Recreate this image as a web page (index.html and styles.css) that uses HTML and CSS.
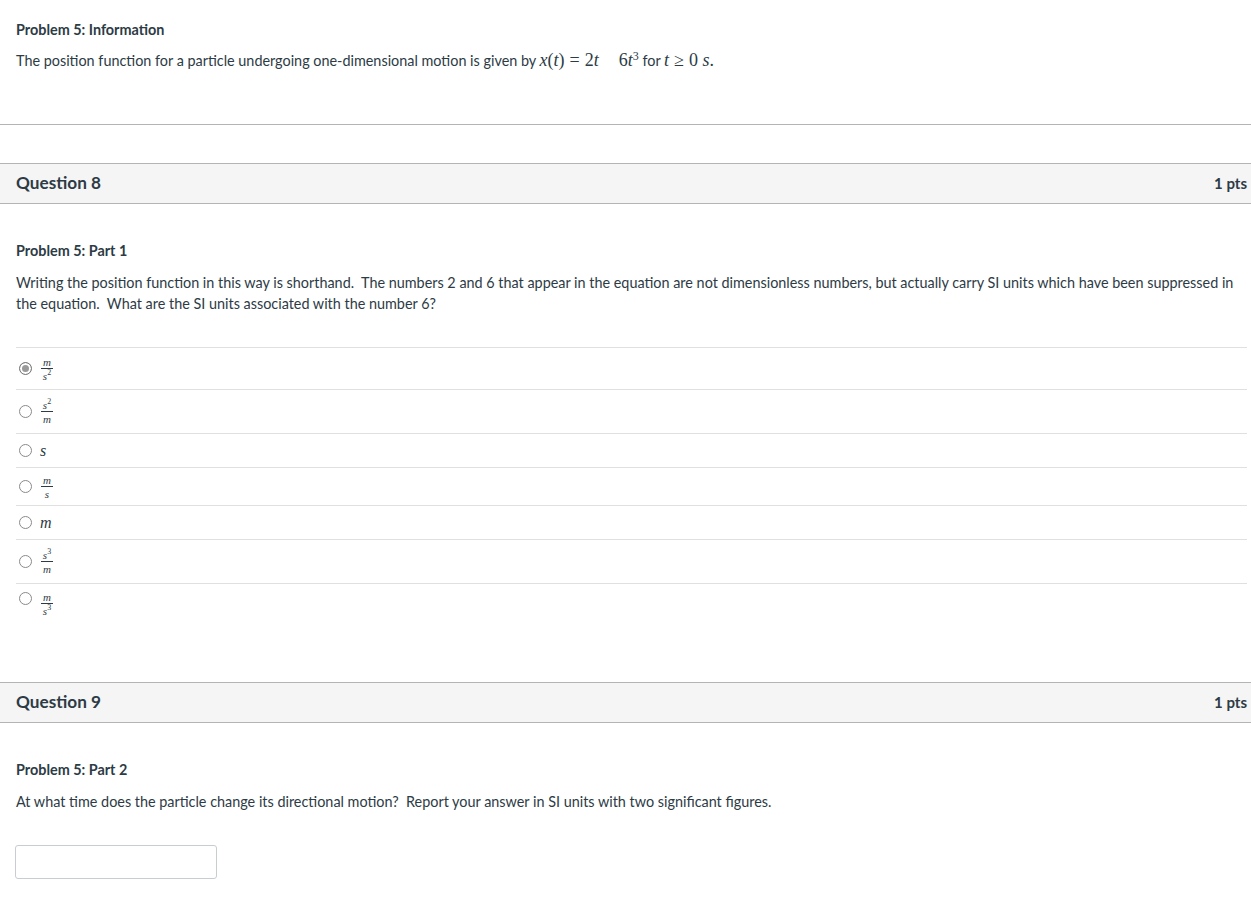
FILE: index.html
```html
<!DOCTYPE html>
<html>
<head>
<meta charset="utf-8">
<link rel="stylesheet" href="styles.css">
</head>
<body>
<div class="info">
  <div class="title">Problem 5: Information</div>
  <p class="text">The position function for a particle undergoing one-dimensional motion is given by <span class="math"><i>x</i>(<i>t</i>)<span class="op">=</span>2<i>t</i><span class="gap"></span>6<i>t</i><sup>3</sup></span> for <span class="math"><i>t</i><span class="op">≥</span>0 <i>s</i>.</span></p>
</div>
<hr class="rule">

<section class="question">
  <header class="qhead"><span class="qname">Question 8</span><span class="pts">1 pts</span></header>
  <div class="qbody">
    <div class="title">Problem 5: Part 1</div>
    <p class="text">Writing the position function in this way is shorthand.&nbsp; The numbers 2 and 6 that appear in the equation are not dimensionless numbers, but actually carry SI units which have been suppressed in the equation.&nbsp; What are the SI units associated with the number 6?</p>
    <div class="answers">
      <div class="opt h41"><span class="radio checked"></span><span class="frac"><span class="num">m</span><span class="den">s<sup>2</sup></span></span></div>
      <div class="opt h44"><span class="radio"></span><span class="frac"><span class="num">s<sup>2</sup></span><span class="den">m</span></span></div>
      <div class="opt h34"><span class="radio"></span><span class="var">s</span></div>
      <div class="opt h38"><span class="radio"></span><span class="frac"><span class="num">m</span><span class="den">s</span></span></div>
      <div class="opt h34"><span class="radio"></span><span class="var">m</span></div>
      <div class="opt h44"><span class="radio"></span><span class="frac"><span class="num">s<sup>3</sup></span><span class="den">m</span></span></div>
      <div class="opt last"><span class="radio"></span><span class="frac"><span class="num">m</span><span class="den">s<sup>3</sup></span></span></div>
    </div>
  </div>
</section>

<section class="question">
  <header class="qhead"><span class="qname">Question 9</span><span class="pts">1 pts</span></header>
  <div class="qbody">
    <div class="title">Problem 5: Part 2</div>
    <p class="text">At what time does the particle change its directional motion?&nbsp; Report your answer in SI units with two significant figures.</p>
    <div class="input"></div>
  </div>
</section>
</body>
</html>
```
FILE: styles.css
```css
* { box-sizing: border-box; }
body {
  margin: 0;
  font-family: Lato, "Open Sans", sans-serif;
  font-size: 14.4px;
  color: #2d3b45;
  background: #fff;
}
.info { padding: 19px 16px 0 16px; }
.title {
  font-weight: bold;
  font-size: 14.4px;
  line-height: 21px;
}
.text {
  margin: 11px 0 0 0;
  line-height: 21px;
  padding-right: 12px;
}
.info .text { margin-top: 10px; }
.math {
  font-family: "Liberation Serif", "DejaVu Serif", serif;
  font-size: 18px;
  line-height: 0;
}
.math sup { font-size: 12px; line-height: 0; vertical-align: 6px; }
.op { padding: 0 5px; }
.gap { display: inline-block; width: 20px; }
.rule {
  margin: 53px 0 0 0;
  border: 0;
  border-top: 1px solid #b4b4b4;
  height: 0;
}
.question { margin-top: 38px; }
.qhead {
  display: flex;
  justify-content: space-between;
  align-items: center;
  height: 41px;
  background: #f5f5f5;
  border-top: 1px solid #b4b4b4;
  border-bottom: 1px solid #b4b4b4;
  padding: 0 4px 2px 16px;
  font-weight: bold;
}
.qname { font-size: 17.2px; }
.pts { font-size: 15px; }
.qbody { padding: 36px 0 0 16px; }
.qbody .text { margin-top: 11px; }
.answers {
  margin-top: 33px;
  margin-right: 4px;
  border-top: 1px solid #e0e0e0;
}
.opt {
  display: flex;
  align-items: center;
  gap: 8px;
  border-bottom: 1px solid #e0e0e0;
  padding-left: 3px;
}
.opt.last { border-bottom: 0; height: 60px; align-items: flex-start; padding-top: 8px; }
.h41 { height: 42px; }
.h44 { height: 44px; }
.h34 { height: 34px; }
.h38 { height: 38px; }
.radio {
  width: 13px;
  height: 13px;
  border: 1px solid #8a8a8a;
  border-radius: 50%;
  background: #fff;
  flex: none;
}
.radio.checked {
  background: #9a9a9a;
  box-shadow: inset 0 0 0 2px #fff;
  border-color: #7a7a7a;
}
.var {
  font-family: "Liberation Serif", serif;
  font-style: italic;
  font-size: 16px;
}
.frac {
  display: inline-flex;
  flex-direction: column;
  align-items: center;
  font-family: "Liberation Serif", serif;
  font-style: italic;
  font-size: 11px;
  line-height: 10px;
  padding: 0 1px;
}
.frac .num {
  border-bottom: 1px solid #2d3b45;
  padding: 0 1px 1px;
  min-width: 12px;
  text-align: center;
}
.frac .den { padding-top: 2px; }
.frac sup { font-size: 8px; line-height: 0; font-style: normal; }
.input {
  margin-top: 33px;
  margin-left: -1px;
  width: 202px;
  height: 34px;
  border: 1px solid #c7cdd1;
  border-radius: 3px;
}
```
